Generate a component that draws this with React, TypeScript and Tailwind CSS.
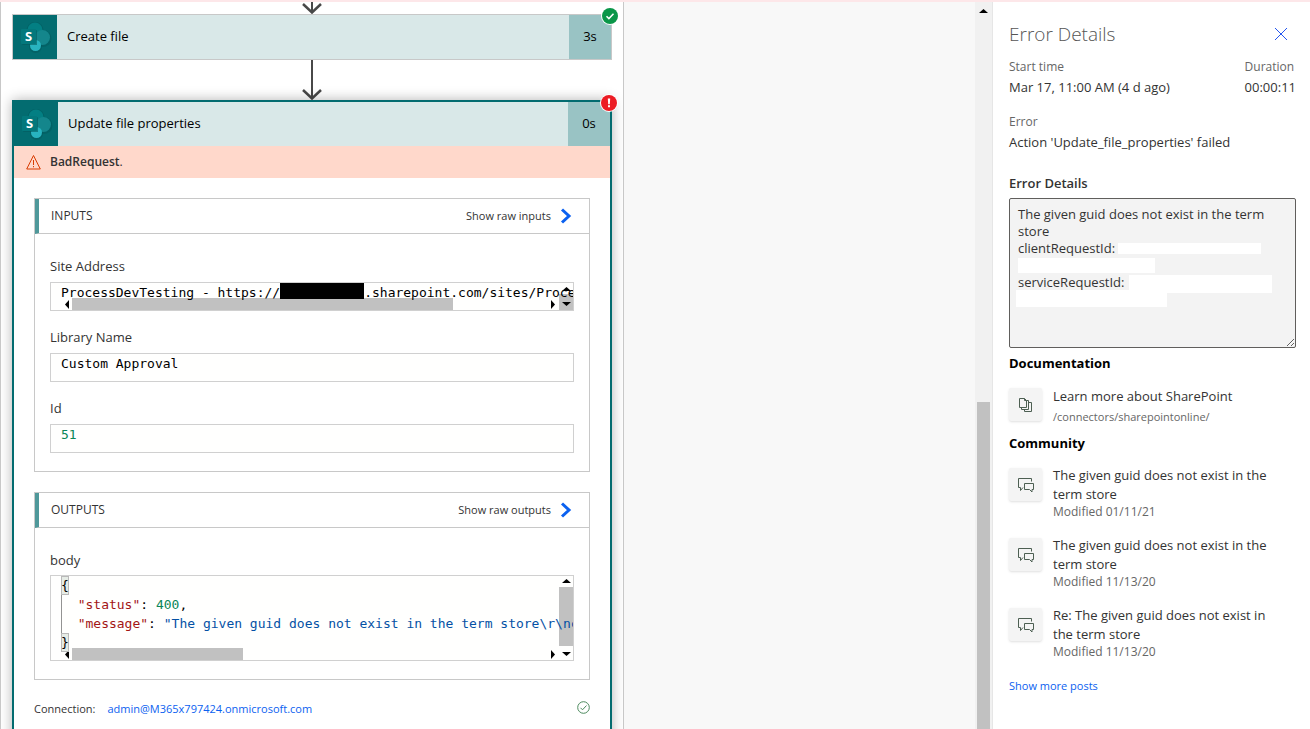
import type { ReactNode } from 'react'

const posts = [
  { title: 'The given guid does not exist in the term store', modified: 'Modified 01/11/21' },
  { title: 'The given guid does not exist in the term store', modified: 'Modified 11/13/20' },
  { title: 'Re: The given guid does not exist in the term store', modified: 'Modified 11/13/20' },
]

function SharePointIcon() {
  return (
    <svg viewBox="0 0 44 44" className="w-11 h-11 shrink-0 bg-[#036c70]" aria-hidden="true">
      <circle cx="22" cy="15.500" r="8.500" fill="#03585b" opacity="0.5" />
      <circle cx="30" cy="23.500" r="8.500" fill="#03585b" opacity="0.5" />
      <circle cx="22.500" cy="31.500" r="6.500" fill="#03585b" opacity="0.5" />
      <circle cx="22" cy="15" r="7.500" fill="#037f83" />
      <circle cx="29.500" cy="22.500" r="7.500" fill="#14868c" />
      <circle cx="22.500" cy="30.500" r="5.500" fill="#28b3bf" />
      <path d="M9 15h14a1 1 0 0 1 1 1v14H10a1 1 0 0 1-1-1z" fill="#035a5d" opacity="0.6" />
      <rect x="8" y="14" width="15" height="15" rx="1" fill="#03787c" />
      <text x="15.500" y="26" textAnchor="middle" fontSize="13" fontWeight="700" fill="#fff" fontFamily="Open Sans, sans-serif">
        S
      </text>
    </svg>
  )
}

function Arrow({ line }: { line: number }) {
  return (
    <div className="flex flex-col items-center">
      <svg width="20" height={line} viewBox={`0 0 20 ${line}`} fill="none" stroke="#484848" strokeWidth="2" aria-hidden="true">
        <path d={`M10 0V${line - 2}`} />
        <path d={`M1 ${line - 10}l9 8.500l9-8.500`} strokeWidth="2.500" />
      </svg>
    </div>
  )
}

function SuccessBadge() {
  return (
    <svg viewBox="0 0 18 18" className="absolute -top-2 -right-2 w-[18px] h-[18px]" aria-label="Succeeded">
      <circle cx="9" cy="9" r="9" fill="#fff" />
      <circle cx="9" cy="9" r="8" fill="#0a9648" />
      <path d="M5.500 9.200l2.400 2.400 4.600-4.800" fill="none" stroke="#fff" strokeWidth="1.500" />
    </svg>
  )
}

function FailedBadge() {
  return (
    <svg viewBox="0 0 18 18" className="absolute -top-2 -right-2 w-[18px] h-[18px]" aria-label="Failed">
      <circle cx="9" cy="9" r="9" fill="#fff" />
      <circle cx="9" cy="9" r="8" fill="#ec1c24" />
      <path d="M7.800 4.500h2.400l-.4 5.800H8.200zM8 11.300h2v2H8z" fill="#fff" />
    </svg>
  )
}

function Caret({ direction }: { direction: 'up' | 'down' | 'left' | 'right' }) {
  const shapes = {
    up: 'M0 6L4.500 2L9 6z',
    down: 'M0 3L4.500 7L9 3z',
    left: 'M6 0L2 4.500L6 9z',
    right: 'M3 0L7 4.500L3 9z',
  }
  return (
    <svg width="9" height="9" viewBox="0 0 9 9" fill="#000" className="shrink-0" aria-hidden="true">
      <path d={shapes[direction]} />
    </svg>
  )
}

function HorizontalBar({ thumb }: { thumb: string }) {
  return (
    <div className="absolute left-3 right-4 bottom-0 h-3 flex items-center">
      <Caret direction="left" />
      <div className="flex-1 h-3">
        <div className={`h-3 bg-[#c1c1c1] ${thumb}`}></div>
      </div>
      <Caret direction="right" />
    </div>
  )
}

function Section({ title, action, children }: { title: string; action: string; children: ReactNode }) {
  return (
    <section className="border border-[#c8c8c8] mb-5">
      <div className="h-[35px] flex items-center border-b border-[#c8c8c8] border-l-4 border-l-[#4f989a] pl-3 pr-4">
        <h3 className="text-xs text-[#333]">{title}</h3>
        <button className="ml-auto flex items-center gap-2 text-[11px] text-[#333]">
          {action}
          <svg width="14" height="16" viewBox="0 0 14 16" fill="none" stroke="#0b61f0" strokeWidth="3" aria-hidden="true">
            <path d="M3 1.500L10 8l-7 6.500" />
          </svg>
        </button>
      </div>
      <div className="pt-[22px] px-[15px] pb-[18px] flex flex-col gap-4">{children}</div>
    </section>
  )
}

function Field({ id, label, value, color }: { id: string; label: string; value: string; color: string }) {
  return (
    <div>
      <label htmlFor={id} className="block text-[13px] leading-5 text-[#333] mb-[6px]">
        {label}
      </label>
      <input
        id={id}
        readOnly
        defaultValue={value}
        className={`block w-full h-[29px] border border-[#d0d0d0] bg-[#fffffe] pl-[10px] pb-2 font-['DejaVu_Sans_Mono',monospace] text-[13px] ${color}`}
      />
    </div>
  )
}

function Tile({ children }: { children: ReactNode }) {
  return (
    <div className="w-[33px] h-[33px] mt-[2px] shrink-0 flex items-center justify-center rounded-xs bg-[#f4f4f4] shadow-sm">
      {children}
    </div>
  )
}

function Flow() {
  return (
    <div className="w-[624px] shrink-0 border-x border-[#c8c8c8] bg-white px-[11px] overflow-hidden">
      <Arrow line={12} />
      {/* Create file */}
      <div className="relative flex items-center border border-[#c8c8c8] bg-[#d9e8e8] text-[13px]">
        <SharePointIcon />
        <h2 className="flex-1 px-[10px]">Create file</h2>
        <span className="w-[42px] h-11 flex items-center justify-center bg-[#99c3c4]">3s</span>
        <SuccessBadge />
      </div>
      <Arrow line={40} />
      {/* Update file properties */}
      <div className="relative border-2 border-[#036c70] bg-white pb-10 shadow-[0_0_12px_rgba(0,0,0,0.3)]">
        <div className="flex items-center bg-[#d9e8e8] text-[13px]">
          <SharePointIcon />
          <h2 className="flex-1 px-[10px]">Update file properties</h2>
          <span className="w-[42px] h-11 flex items-center justify-center bg-[#99c3c4]">0s</span>
        </div>
        <FailedBadge />
        <div className="h-8 px-3 flex items-center gap-[9px] bg-[#ffd8cb] text-xs text-[#333]">
          <svg width="15" height="16" viewBox="0 0 15 16" fill="none" stroke="#d83b01" aria-hidden="true">
            <path d="M7.500 1.500L14.300 15H.7z" />
            <path d="M7.500 6v5M7.500 12v1.300" />
          </svg>
          <p><b className="font-semibold">BadRequest</b>.</p>
        </div>

        <div className="p-5">
          <Section title="INPUTS" action="Show raw inputs">
            <div>
              <h4 className="text-[13px] leading-5 text-[#333] mb-[6px]">Site Address</h4>
              <div className="relative h-[29px] overflow-hidden border border-[#d0d0d0] bg-[#fffffe] pl-[10px] font-['DejaVu_Sans_Mono',monospace] text-[13px] leading-[19px] text-black">
                <div className="absolute right-0 bottom-0 w-[14px] h-4 bg-[#c1c1c1]"></div>
                <div className="absolute right-0 inset-y-0 w-[14px] flex flex-col items-center justify-between py-[2px]">
                  <Caret direction="up" />
                  <Caret direction="down" />
                </div>
                <HorizontalBar thumb="w-[80%]" />
                <div className="relative flex whitespace-nowrap">
                  <span>ProcessDevTesting - https://</span>
                  <span className="w-[84px] h-4 shrink-0 bg-black"></span>
                  <span>.sharepoint.com/sites/Proces</span>
                </div>
              </div>
            </div>
            <Field id="library" label="Library Name" value="Custom Approval" color="text-black" />
            <Field id="item-id" label="Id" value="51" color="text-[#098658]" />
          </Section>

          <Section title="OUTPUTS" action="Show raw outputs">
            <div>
              <h4 className="text-[13px] leading-5 text-[#333] mb-[5px]">body</h4>
              <div className="relative h-[86px] overflow-hidden border border-[#d0d0d0] bg-[#fffffe] pl-[10px]">
                <div className="absolute right-0 inset-y-0 w-[14px] flex flex-col items-center pt-px pb-[2px]">
                  <Caret direction="up" />
                  <div className="w-full h-[59px] mt-px bg-[#c1c1c1]"></div>
                  <div className="mt-auto"><Caret direction="down" /></div>
                </div>
                <HorizontalBar thumb="w-[36%]" />
                <pre className="relative font-['DejaVu_Sans_Mono',monospace] text-[13px] leading-[19px] text-black">
                  <span className="block w-2 bg-[#e6ece6] outline outline-[#b9b9b9] -outline-offset-1">{'{'}</span>
                  <span className="block border-l border-[#939393]">
                    {'  '}<span className="text-[#a31515]">"status"</span>: <span className="text-[#098658]">400</span>,{'\n'}
                    {'  '}<span className="text-[#a31515]">"message"</span>: <span className="text-[#0451a5]">"The given guid does not exist in the term store\r\ncl</span>
                  </span>
                  <span className="block w-2 bg-[#e6ece6] outline outline-[#b9b9b9] -outline-offset-1">{'}'}</span>
                </pre>
              </div>
            </div>
          </Section>

          <div className="flex items-center text-[11px] leading-[18px] text-[#333]">
            <span>Connection:</span>
            <a href="#connection" className="ml-3 text-[#0b61f0]">admin@M365x797424.onmicrosoft.com</a>
            <svg width="13" height="13" viewBox="0 0 13 13" fill="none" stroke="#4d8a5e" className="ml-auto mb-1" aria-label="Connected">
              <circle cx="6.500" cy="6.500" r="5.800" />
              <path d="M3.500 6.800l2 2 4-4.300" />
            </svg>
          </div>
        </div>
      </div>
    </div>
  )
}

function ErrorPanel() {
  return (
    <aside className="w-[318px] shrink-0 border-l border-[#e6e6e6] bg-white pt-4 pl-4 pr-[14px] text-[#333]">
      <div className="flex items-center justify-between pr-2">
        <h1 className="text-[19px] leading-8 font-light text-[#555]">Error Details</h1>
        <button aria-label="Close">
          <svg width="14" height="14" viewBox="0 0 14 14" stroke="#2456f0" aria-hidden="true">
            <path d="M1 1l12 12M13 1L1 13" />
          </svg>
        </button>
      </div>

      <dl className="mt-[6px] flex justify-between text-[13px] leading-[21px]">
        <div>
          <dt className="text-xs leading-[21px] text-[#666]">Start time</dt>
          <dd>Mar 17, 11:00 AM (4 d ago)</dd>
        </div>
        <div>
          <dt className="text-xs leading-[21px] text-[#666]">Duration</dt>
          <dd>00:00:11</dd>
        </div>
      </dl>
      <dl className="mt-[13px] text-[13px] leading-[21px]">
        <dt className="text-xs leading-[21px] text-[#666]">Error</dt>
        <dd>Action 'Update_file_properties' failed</dd>
      </dl>

      <label htmlFor="details" className="block mt-5 mb-[5px] text-[13px] leading-5 font-semibold">Error Details</label>
      <div className="relative">
        <textarea
          id="details"
          readOnly
          className="block w-full h-[150px] px-2 py-[7px] rounded-xs border border-[#605e5c] bg-[#f3f3f3] text-[13px] leading-[17px]"
          defaultValue={'The given guid does not exist in the term store\nclientRequestId:\n\nserviceRequestId:'}
        />
        {/* hidden ids */}
        <span className="absolute left-[109px] top-[45px] w-[143px] h-[11px] bg-white"></span>
        <span className="absolute left-[9px] top-[60px] w-[137px] h-[15px] bg-white"></span>
        <span className="absolute left-[120px] top-[77px] w-[143px] h-[18px] bg-white"></span>
        <span className="absolute left-[7px] top-[92px] w-[151px] h-[17px] bg-white"></span>
      </div>

      <h2 className="mt-[5px] text-[13px] leading-5 font-bold text-black">Documentation</h2>
      <div className="mt-[13px] flex gap-[11px]">
        <Tile>
          <svg width="15" height="16" viewBox="0 0 15 16" fill="none" stroke="#4d5f52" aria-hidden="true">
            <path d="M1.500 1.500h5l2 2v7h-7z" />
            <path d="M6.500 1.500v2h2" />
            <path d="M8.500 3.500h2v9h-7v-2" />
            <path d="M10.500 5.500h3v9h-7v-2" />
          </svg>
        </Tile>
        <div>
          <a href="#sharepoint" className="block text-[13px] leading-[21px]">Learn more about SharePoint</a>
          <p className="text-[11px] leading-[19px] text-[#666]">/connectors/sharepointonline/</p>
        </div>
      </div>

      <h2 className="mt-[7px] text-[13px] leading-5 font-bold text-black">Community</h2>
      <ul className="mt-[13px] flex flex-col gap-4">
        {posts.map((post, index) => (
          <li key={index} className="flex gap-[11px] pr-4">
            <Tile>
              <svg width="17" height="16" viewBox="0 0 17 16" fill="none" stroke="#4d5f52" aria-hidden="true">
                <path d="M14.500 4.500v-3h-13v9h2v3l2.500-3" />
                <path d="M7.500 6.500h9v6h-1.500v2.500l-2.500-2.500h-5z" />
              </svg>
            </Tile>
            <div>
              <a href="#post" className="block text-[13px] leading-[19px]">{post.title}</a>
              <p className="text-xs leading-4 text-[#666]">{post.modified}</p>
            </div>
          </li>
        ))}
      </ul>
      <a href="#posts" className="block mt-4 text-[11px] leading-5 text-[#0b61f0]">Show more posts</a>
    </aside>
  )
}

export default function App() {
  return (
    <div className="h-screen flex flex-col overflow-hidden bg-[#f8f8f8] font-['Open_Sans','Noto_Sans',sans-serif] text-black">
      <div className="h-[2px] shrink-0 bg-[#fde7e9]"></div>
      <div className="flex-1 min-h-0 flex">
        <main className="flex-1 min-w-0 flex overflow-hidden">
          <Flow />
        </main>
        {/* Canvas scrollbar */}
        <div className="w-[17px] shrink-0 flex flex-col items-center bg-[#f1f1f1] pt-[5px]">
          <Caret direction="up" />
          <div className="w-[13px] flex-1 mt-[386px] bg-[#c1c1c1]"></div>
        </div>
        <ErrorPanel />
      </div>
    </div>
  )
}
